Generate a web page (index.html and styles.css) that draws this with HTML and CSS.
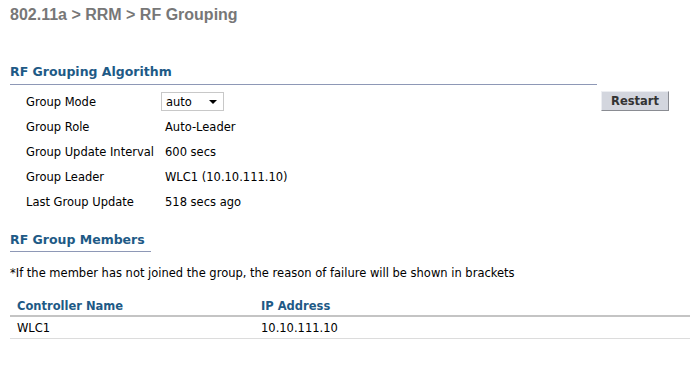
FILE: index.html
```html
<!DOCTYPE html>
<html>
<head>
<meta charset="utf-8">
<link rel="stylesheet" href="styles.css">
</head>
<body>
<div class="page">
  <h1 class="title">802.11a &gt; RRM &gt; RF Grouping</h1>

  <div class="algo">
    <div class="algo-main">
      <h2 class="section wide">RF Grouping Algorithm</h2>
      <div class="rows">
        <div class="row">
          <span class="label">Group Mode</span>
          <span class="value"><span class="select"><span>auto</span><span class="caret"></span></span></span>
        </div>
        <div class="row"><span class="label">Group Role</span><span class="value">Auto-Leader</span></div>
        <div class="row"><span class="label">Group Update Interval</span><span class="value">600 secs</span></div>
        <div class="row"><span class="label">Group Leader</span><span class="value">WLC1 (10.10.111.10)</span></div>
        <div class="row"><span class="label">Last Group Update</span><span class="value">518 secs ago</span></div>
      </div>
    </div>
    <div class="algo-side">
      <button class="btn">Restart</button>
    </div>
  </div>

  <h2 class="section narrow">RF Group Members</h2>
  <p class="note">*If the member has not joined the group, the reason of failure will be shown in brackets</p>

  <table class="members">
    <thead>
      <tr><th class="c1">Controller Name</th><th>IP Address</th></tr>
    </thead>
    <tbody>
      <tr><td class="c1">WLC1</td><td>10.10.111.10</td></tr>
    </tbody>
  </table>
</div>
</body>
</html>
```
FILE: styles.css
```css
html, body {
  margin: 0;
  padding: 0;
  background: #ffffff;
}
.page {
  padding: 0 0 0 10px;
  font-family: "DejaVu Sans", Verdana, sans-serif;
  font-size: 11.5px;
  color: #000;
}
.title {
  margin: 0;
  padding-top: 5px;
  height: 23px;
  font-family: "Liberation Sans", Arial, sans-serif;
  font-size: 16px;
  font-weight: bold;
  color: #777777;
  line-height: 19px;
}
.algo {
  display: flex;
  margin-top: 36px;
}
.algo-main {
  width: 587px;
}
.algo-side {
  padding-top: 27px;
  padding-left: 4px;
}
.section {
  margin: 0;
  font-size: 12.5px;
  font-weight: bold;
  color: #1e5a86;
  line-height: 15px;
  padding-bottom: 5px;
  border-bottom: 1px solid #8e98b6;
}
.section.narrow {
  width: 141px;
  margin-top: 18px;
  padding-bottom: 4px;
}
.rows {
  padding-top: 4px;
  padding-left: 16px;
}
.row {
  display: flex;
  align-items: center;
  height: 25px;
}
.label {
  width: 139px;
}
.select {
  display: inline-flex;
  align-items: center;
  justify-content: space-between;
  box-sizing: border-box;
  width: 63px;
  height: 19px;
  margin-left: -4px;
  padding: 0 6px 0 4px;
  border: 1px solid #c8c8c8;
  background: #fff;
}
.caret {
  width: 0;
  height: 0;
  border-left: 4px solid transparent;
  border-right: 4px solid transparent;
  border-top: 4px solid #000;
}
.btn {
  box-sizing: border-box;
  width: 68px;
  height: 20px;
  padding: 0;
  font-family: "DejaVu Sans", Verdana, sans-serif;
  font-size: 11.5px;
  font-weight: bold;
  color: #333;
  background: #d3d6de;
  border: 1px solid;
  border-color: #eceef2 #8a8c92 #8a8c92 #eceef2;
}
.note {
  margin: 14px 0 0 0;
  line-height: 14px;
}
.members {
  margin-top: 18px;
  border-collapse: collapse;
  width: 680px;
}
.members th {
  text-align: left;
  font-weight: bold;
  color: #1e5a86;
  padding: 0 0 2px 4px;
  height: 15px;
  border-bottom: 2px solid #c4c4c4;
}
.members th.c1, .members td.c1 {
  width: 240px;
  padding-left: 7px;
}
.members td {
  padding: 4px 0 3px 4px;
  height: 13px;
  border-bottom: 1px solid #dcdcdc;
}
```
